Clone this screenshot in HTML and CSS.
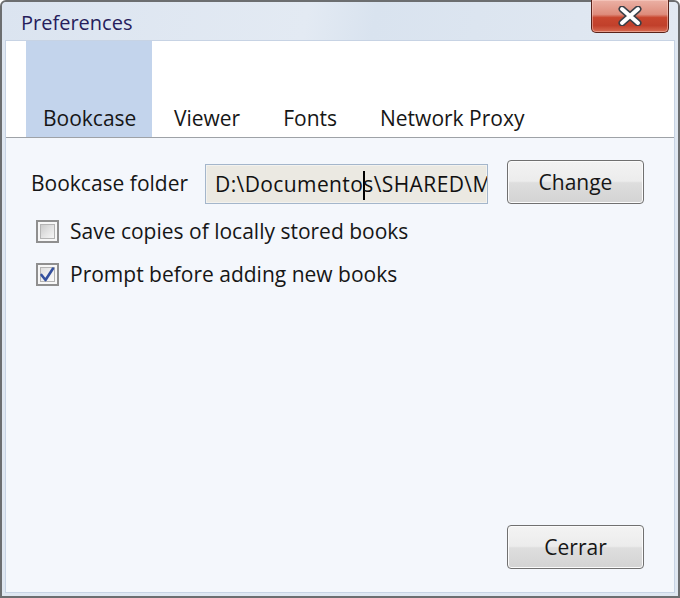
FILE: index.html
```html
<!DOCTYPE html>
<html>
<head>
<meta charset="utf-8">
<title>Preferences</title>
<link rel="stylesheet" href="styles.css">
</head>
<body>
<div class="window">
  <div class="titlebar">
    <span class="title">Preferences</span>
    <div class="close">
      <svg width="28" height="20" viewBox="0 0 28 20">
        <path d="M6 3 L22 17 M22 3 L6 17" stroke="#3a3f47" stroke-width="7" stroke-linecap="round"/>
        <path d="M6 3 L22 17 M22 3 L6 17" stroke="#ffffff" stroke-width="4" stroke-linecap="round"/>
      </svg>
    </div>
  </div>
  <div class="client">
    <div class="tabs">
      <div class="tab active">Bookcase</div>
      <div class="tab">Viewer</div>
      <div class="tab">Fonts</div>
      <div class="tab">Network Proxy</div>
    </div>
    <div class="panel">
      <div class="folder-row">
        <span class="label">Bookcase folder</span>
        <div class="input"><span class="input-text">D:\Documento<span class="caret"></span>s\SHARED\M</span></div>
        <div class="button change">Change</div>
      </div>
      <div class="check-row first">
        <span class="cb"><span class="cb-inner"></span></span>
        <span class="cb-label">Save copies of locally stored books</span>
      </div>
      <div class="check-row">
        <span class="cb checked"><span class="cb-inner">
          <svg width="17" height="17" viewBox="0 0 17 17"><path d="M2.5 9 L6.5 14 L14 2.5" fill="none" stroke="#34509e" stroke-width="2.6" stroke-linejoin="round" stroke-linecap="round"/></svg>
        </span></span>
        <span class="cb-label">Prompt before adding new books</span>
      </div>
      <div class="footer">
        <div class="button">Cerrar</div>
      </div>
    </div>
  </div>
</div>
</body>
</html>
```

FILE: styles.css
```css
html, body {
  margin: 0;
  padding: 0;
  background: #ffffff;
}

body {
  font-family: "Open Sans", "Noto Sans", sans-serif;
  font-size: 21px;
  color: #161616;
}

.window {
  width: 680px;
  height: 598px;
  box-sizing: border-box;
  border: 2px solid #6c6e70;
  border-radius: 6px 6px 0 0;
  background: #dfe7f1;
  display: flex;
  flex-direction: column;
}

.titlebar {
  height: 38px;
  flex: 0 0 38px;
  display: flex;
  align-items: flex-start;
  padding-left: 19px;
  background: linear-gradient(100deg, #dbe4f0 0%, #e3eaf3 45%, #d9e3ef 55%, #e2e9f2 100%);
  border-radius: 5px 5px 0 0;
}

.title {
  font-size: 20px;
  line-height: 28px;
  margin-top: 7px;
  color: #261d5c;
}

.close {
  margin-left: auto;
  margin-right: 9px;
  margin-top: -2px;
  width: 78px;
  height: 33px;
  box-sizing: border-box;
  border: 1px solid #5a2219;
  border-top: none;
  border-radius: 0 0 5px 5px;
  background: linear-gradient(to bottom, #ebb1a5 0%, #de8c7c 45%, #c8462f 55%, #c1402b 80%, #d86b52 100%);
  box-shadow: inset 0 0 0 1px rgba(255, 220, 210, 0.45);
  display: flex;
  align-items: center;
  justify-content: center;
}

.client {
  flex: 1 1 auto;
  margin: 0 3px 3px 3px;
  border: 1px solid #c7d3e4;
  background: #ffffff;
  display: flex;
  flex-direction: column;
}

.tabs {
  height: 96px;
  flex: 0 0 96px;
  display: flex;
  align-items: flex-end;
  padding-left: 20px;
  border-bottom: 1px solid #9ea2a7;
  background: #ffffff;
}

.tab {
  line-height: 29px;
  padding: 0 21.5px 4px 21.5px;
  color: #161616;
  white-space: nowrap;
}

.tab.active {
  padding: 63px 16px 4px 17px;
  background: #c3d4ec;
}

.panel {
  flex: 1 1 auto;
  background: #f4f7fc;
  padding: 22px 30px 23px 25px;
  display: flex;
  flex-direction: column;
}

.folder-row {
  display: flex;
  align-items: flex-end;
  height: 44px;
}

.label {
  flex: 0 0 174px;
  line-height: 29px;
  padding-bottom: 6px;
  white-space: nowrap;
}

.input {
  flex: 0 0 283px;
  height: 40px;
  box-sizing: border-box;
  border: 1px solid #a4b6cb;
  box-shadow: inset 0 0 0 1px #f3f2ee;
  background: #ebe9e2;
  padding: 0 5px 0 9px;
  overflow: hidden;
  display: flex;
  align-items: center;
}

.input-text {
  white-space: nowrap;
  line-height: 29px;
  color: #111111;
  padding-top: 2px;
  letter-spacing: 0.4px;
}

.caret {
  display: inline-block;
  width: 2px;
  height: 29px;
  margin-right: -2px;
  background: #000000;
  vertical-align: -8px;
}

.button {
  width: 137px;
  height: 44px;
  box-sizing: border-box;
  border: 1px solid #707070;
  border-radius: 4px;
  background: linear-gradient(to bottom, #f3f3f3 0%, #ececec 48%, #dedede 52%, #d3d3d3 100%);
  box-shadow: inset 0 0 0 1px #fbfbfb;
  display: flex;
  align-items: center;
  justify-content: center;
  line-height: 29px;
  color: #161616;
}

.change {
  margin-left: 19px;
}

.check-row {
  display: flex;
  align-items: center;
  height: 29px;
  margin-top: 14px;
}

.check-row.first {
  margin-top: 13px;
}

.cb {
  width: 23px;
  height: 23px;
  box-sizing: border-box;
  margin-left: 5px;
  border: 2px solid #8f8f8f;
  background: #f7f7f7;
  padding: 2px;
  margin-top: -1px;
}

.cb-inner {
  display: block;
  width: 15px;
  height: 15px;
  background: linear-gradient(135deg, #cbcbcb 0%, #e2e2e2 50%, #f6f6f6 100%);
  border: 1px solid #b4b4b4;
  box-sizing: border-box;
  position: relative;
}

.cb.checked .cb-inner {
  background: linear-gradient(135deg, #dedede 0%, #efefef 50%, #fafafa 100%);
}

.cb-inner svg {
  position: absolute;
  left: -2px;
  top: -2px;
}

.cb-label {
  margin-left: 11px;
  line-height: 29px;
  white-space: nowrap;
}

.footer {
  margin-top: auto;
  display: flex;
  justify-content: flex-end;
}
```
